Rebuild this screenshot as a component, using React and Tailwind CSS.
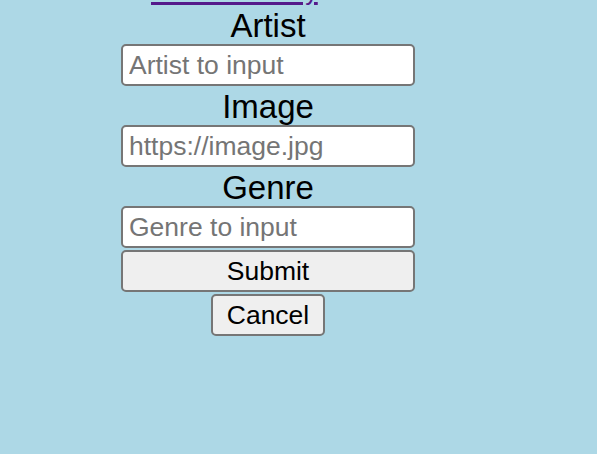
import { useState } from 'react';

export default function App() {
  const [artist, setArtist] = useState('');
  const [image, setImage] = useState('');
  const [genre, setGenre] = useState('');

  const fields = [
    { label: 'Artist', value: artist, set: setArtist, placeholder: 'Artist to input' },
    { label: 'Image', value: image, set: setImage, placeholder: 'https://image.jpg' },
    { label: 'Genre', value: genre, set: setGenre, placeholder: 'Genre to input' },
  ];

  return (
    <div className="min-h-[454px] bg-[#add8e6] overflow-hidden font-['Liberation_Sans',Arial,sans-serif] text-black">
      {/* nav link, mostly scrolled out of view */}
      <div className="mt-[-24px] h-[29px] pl-[151px] text-[25px] leading-[30px]">
        <a href="#" className="text-[#551a8b] underline decoration-[3px]">Back to Library</a>
      </div>

      <form
        className="ml-[121px] w-[294px] flex flex-col items-center"
        onSubmit={(e) => e.preventDefault()}
      >
        {fields.map((f) => (
          <div key={f.label} className="w-full flex flex-col items-center">
            <label className="pt-[3px] text-[33px] leading-[36px]">{f.label}</label>
            <input
              type="text"
              value={f.value}
              onChange={(e) => f.set(e.target.value)}
              placeholder={f.placeholder}
              className="w-full h-[42px] px-[6px] bg-white border-2 border-[#767676] rounded-[5px] text-[26.5px] placeholder:text-[#757575] outline-none"
            />
          </div>
        ))}
        <button
          type="submit"
          className="mt-[2px] w-full h-[42px] bg-[#efefef] border-2 border-[#767676] rounded-[5px] text-[26.5px]"
        >
          Submit
        </button>
        <button
          type="button"
          className="mt-[2px] h-[42px] px-[14px] bg-[#efefef] border-2 border-[#767676] rounded-[5px] text-[26.5px]"
        >
          Cancel
        </button>
      </form>
    </div>
  );
}
